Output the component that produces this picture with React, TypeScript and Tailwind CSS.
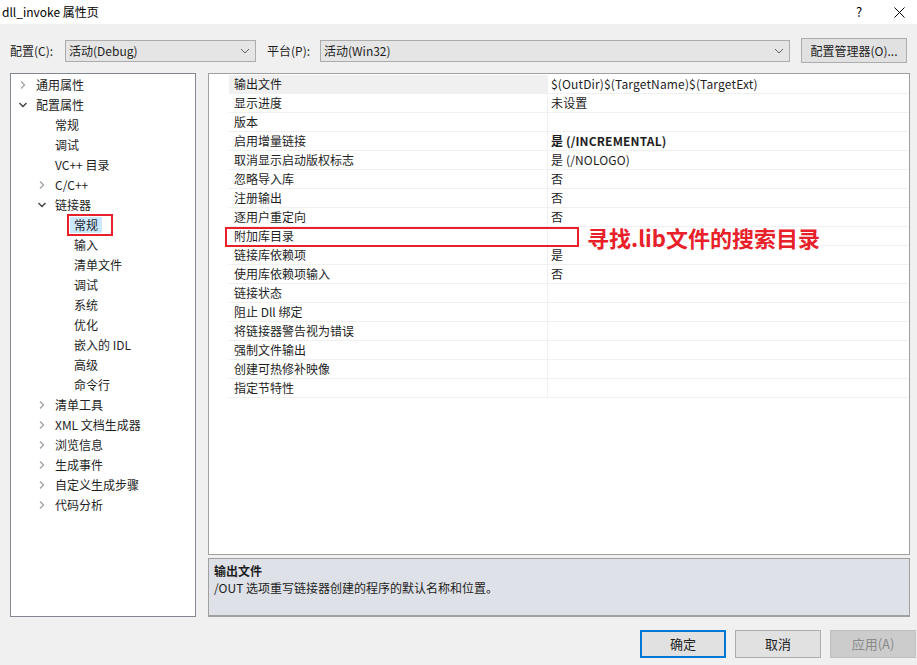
import React from "react";

const FONT = "font-['Noto_Sans_CJK_SC','Microsoft_YaHei',sans-serif]";

function ChevronRight() {
  return (
    <svg width="8" height="10" viewBox="0 0 8 10">
      <path d="M2 1.5 L5.5 5 L2 8.5" fill="none" stroke="#a3a3a3" strokeWidth="1.4" />
    </svg>
  );
}
function ChevronDown() {
  return (
    <svg width="10" height="8" viewBox="0 0 10 8">
      <path d="M1.5 2 L5 5.5 L8.5 2" fill="none" stroke="#404040" strokeWidth="1.4" />
    </svg>
  );
}
function SelectChevron() {
  return (
    <svg width="10" height="6" viewBox="0 0 10 6">
      <path d="M1 1 L5 5 L9 1" fill="none" stroke="#606060" strokeWidth="1" />
    </svg>
  );
}

type TreeItem = { label: string; level: 0 | 1 | 2; state?: "open" | "closed"; selected?: boolean };

const tree: TreeItem[] = [
  { label: "通用属性", level: 0, state: "closed" },
  { label: "配置属性", level: 0, state: "open" },
  { label: "常规", level: 1 },
  { label: "调试", level: 1 },
  { label: "VC++ 目录", level: 1 },
  { label: "C/C++", level: 1, state: "closed" },
  { label: "链接器", level: 1, state: "open" },
  { label: "常规", level: 2, selected: true },
  { label: "输入", level: 2 },
  { label: "清单文件", level: 2 },
  { label: "调试", level: 2 },
  { label: "系统", level: 2 },
  { label: "优化", level: 2 },
  { label: "嵌入的 IDL", level: 2 },
  { label: "高级", level: 2 },
  { label: "命令行", level: 2 },
  { label: "清单工具", level: 1, state: "closed" },
  { label: "XML 文档生成器", level: 1, state: "closed" },
  { label: "浏览信息", level: 1, state: "closed" },
  { label: "生成事件", level: 1, state: "closed" },
  { label: "自定义生成步骤", level: 1, state: "closed" },
  { label: "代码分析", level: 1, state: "closed" },
];

const levelPad = ["pl-[4px]", "pl-[23px]", "pl-[42px]"];

type Prop = { name: string; value: string; bold?: boolean };
const props: Prop[] = [
  { name: "输出文件", value: "$(OutDir)$(TargetName)$(TargetExt)" },
  { name: "显示进度", value: "未设置" },
  { name: "版本", value: "" },
  { name: "启用增量链接", value: "是 (/INCREMENTAL)", bold: true },
  { name: "取消显示启动版权标志", value: "是 (/NOLOGO)" },
  { name: "忽略导入库", value: "否" },
  { name: "注册输出", value: "否" },
  { name: "逐用户重定向", value: "否" },
  { name: "附加库目录", value: "" },
  { name: "链接库依赖项", value: "是" },
  { name: "使用库依赖项输入", value: "否" },
  { name: "链接状态", value: "" },
  { name: "阻止 Dll 绑定", value: "" },
  { name: "将链接器警告视为错误", value: "" },
  { name: "强制文件输出", value: "" },
  { name: "创建可热修补映像", value: "" },
  { name: "指定节特性", value: "" },
];

export default function App() {
  return (
    <div className={`relative w-[917px] h-[665px] bg-[#f0f0f0] flex flex-col text-[12px] text-[#1e1e1e] ${FONT} overflow-hidden`}>
      {/* Title bar */}
      <div className="h-[24px] bg-white flex items-center shrink-0">
        <span className="pl-[2px] text-[12px] text-black">dll_invoke 属性页</span>
        <div className="ml-auto flex items-center h-full">
          <span className="w-[20px] text-center text-[13px] text-black mr-[25px]">?</span>
          <svg width="11" height="11" viewBox="0 0 11 11" className="mr-[12px]">
            <path d="M0.5 0.5 L10.5 10.5 M10.5 0.5 L0.5 10.5" stroke="#000" strokeWidth="1" />
          </svg>
        </div>
      </div>

      {/* Config row */}
      <div className="mt-[14px] h-[25px] flex items-center shrink-0 pl-[10px]">
        <span className="w-[55px]">配置(C):</span>
        <div className="w-[191px] h-[22px] bg-[#e5e5e5] border border-[#acacac] flex items-center pl-[3px] pr-[5px]">
          <span className="flex-1">活动(Debug)</span>
          <SelectChevron />
        </div>
        <span className="ml-[11px] w-[53px]">平台(P):</span>
        <div className="w-[470px] h-[22px] bg-[#e5e5e5] border border-[#acacac] flex items-center pl-[3px] pr-[5px]">
          <span className="flex-1">活动(Win32)</span>
          <SelectChevron />
        </div>
        <div className="ml-[11px] w-[106px] h-[25px] bg-[#e1e1e1] border border-[#adadad] flex items-center justify-center">
          配置管理器(O)...
        </div>
      </div>

      {/* Main */}
      <div className="mt-[10px] h-[544px] flex pl-[10px] gap-[12px] shrink-0">
        {/* Tree */}
        <div className="w-[186px] h-full bg-white border border-[#828790] pt-[1px]">
          {tree.map((it, i) => (
            <div key={i} className={`h-[20px] flex items-center ${levelPad[it.level]}`}>
              <div className="w-[16px] h-full flex items-center justify-center">
                {it.state === "closed" && <ChevronRight />}
                {it.state === "open" && <ChevronDown />}
              </div>
              <span
                className={`relative ml-[1px] px-[4px] h-[16px] leading-[16px] ${it.selected ? "bg-[#cce8ff]" : ""}`}
              >
                {it.label}
                {it.selected && (
                  <span className="absolute left-[-3px] right-[-11px] top-[-3px] bottom-[-3px] border-2 border-[#e8202a]" />
                )}
              </span>
            </div>
          ))}
        </div>

        {/* Right */}
        <div className="w-[702px] h-full flex flex-col">
          <div className="h-[482px] bg-white border border-[#a0a0a0] pl-[20px] pt-[1px] shrink-0">
            {props.map((p, i) => (
              <div key={i} className="h-[19px] flex border-b border-[#f0f0f0]">
                <div
                  className={`w-[319px] border-r border-[#f0f0f0] pl-[5px] flex items-center ${i === 0 ? "bg-[#f0f0f0]" : ""}`}
                >
                  {p.name}
                </div>
                <div className={`flex-1 pl-[3px] flex items-center tracking-[0.15px] ${p.bold ? "font-bold" : ""}`}>{p.value}</div>
              </div>
            ))}
          </div>
          <div className="mt-[3px] flex-1 bg-[#dee1e7] border border-[#a0a0a0] border-b-2 border-b-[#a0a0a0] px-[5px] pt-[3px]">
            <div className="font-bold leading-[17px]">输出文件</div>
            <div className="leading-[17px]">/OUT 选项重写链接器创建的程序的默认名称和位置。</div>
          </div>
        </div>
      </div>

      {/* Buttons */}
      <div className="mt-[13px] h-[28px] flex justify-end gap-[9px] pr-[1px] shrink-0">
        <div className="w-[86px] h-[28px] bg-[#e1e1e1] border-2 border-[#0078d7] flex items-center justify-center text-[13px]">
          确定
        </div>
        <div className="w-[86px] h-[28px] bg-[#e1e1e1] border border-[#adadad] flex items-center justify-center text-[13px]">
          取消
        </div>
        <div className="w-[86px] h-[28px] bg-[#cccccc] border border-[#bfbfbf] flex items-center justify-center text-[13px] text-[#8a8a8a]">
          应用(A)
        </div>
      </div>

      {/* Annotation overlay */}
      <div className="absolute left-[225px] top-[227px] w-[354px] h-[20px] border-2 border-[#e8202a]" />
      <div className="absolute left-[587px] top-[223px] text-[22px] font-bold text-[#e8202a] leading-[28px]">
        寻找.lib文件的搜索目录
      </div>
    </div>
  );
}
